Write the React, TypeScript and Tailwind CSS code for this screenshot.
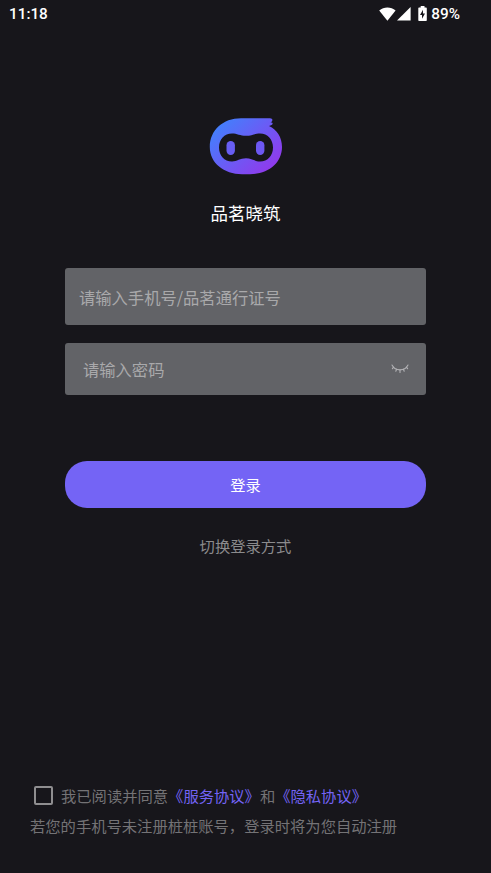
import { useState } from "react";

function StatusBar() {
  return (
    <div className="flex h-7 items-center justify-between pl-[9px] pr-[31px] font-['Roboto',sans-serif] text-[15.3px] font-medium text-white">
      <span>11:18</span>
      <div className="flex items-center">
        <svg className="mr-px h-4 w-[17px]" viewBox="0 0 17 16" fill="currentColor">
          <path d="M.2 4.5C4.8.6 12 .6 16.6 4.5L8.4 14.7z" />
        </svg>
        <svg className="mr-[7px] h-4 w-3.5" viewBox="0 0 14 16" fill="currentColor">
          <path d="M13.6 1v13.5H0z" />
        </svg>
        <svg className="mr-1 h-4 w-[9px]" viewBox="0 0 9 16">
          <path
            d="M2.7 0h3.8v1.4h1.3c.6 0 1 .4 1 1v11.5c0 .6-.4 1-1 1H1.3c-.6 0-1-.4-1-1V2.4c0-.6.4-1 1-1h1.4z"
            fill="currentColor"
          />
          <path d="M5 3.8 2 9h2v3.8L7 7.6H5z" fill="#17161b" />
        </svg>
        <span>89%</span>
      </div>
    </div>
  );
}

function Logo() {
  return (
    <svg className="h-[58px] w-[74px]" viewBox="0 0 74 58">
      <defs>
        <linearGradient id="logo" x1="12" y1="4" x2="60" y2="54" gradientUnits="userSpaceOnUse">
          <stop offset="0" stopColor="#4280fc" />
          <stop offset=".5" stopColor="#6a5cf5" />
          <stop offset="1" stopColor="#903aec" />
        </linearGradient>
      </defs>
      <path
        d="M32 1.2h29c2 0 3 1.5 2 3-.3.6-1 1-1.6 1.3 1.4-.2 2.4.3 2.2 1.2-.2 1-1.5 1.8-3.6 2.3C68 12.500 73 20.500 73 30c0 16-14 27.200-32 27.200h-8C15 57.200.8 46 .8 30 .8 13 14 1.200 32 1.200z"
        fill="url(#logo)"
      />
      <path
        d="M23 16.500c5 0 8 2.300 14 2.300s9-2.300 14-2.300c7.700 0 13 6 13 14s-5.300 14-13 14c-5 0-8-3.200-14-3.200s-9 3.200-14 3.200c-7.700 0-13-6-13-14s5.300-14 13-14z"
        fill="#17161b"
      />
      <rect x="17.500" y="24" width="8.400" height="14" rx="4.200" fill="#685ef4" />
      <rect x="47" y="24" width="8.400" height="14" rx="4.200" fill="#6d58f3" />
    </svg>
  );
}

function ClosedEye() {
  return (
    <svg
      className="h-[10px] w-[18px]"
      viewBox="0 0 18 10"
      fill="none"
      stroke="#b1b1b4"
      strokeWidth="1.100"
      strokeLinecap="round"
    >
      <path d="M1 1c1.700 3.300 4.500 4.900 8 4.900S15.300 4.300 17 1" />
      <path d="M2.600 3.200 1.400 4.700M5.600 5.200l-.8 2M9 6v2.400M12.400 5.200l.8 2M15.400 3.200l1.200 1.500" />
    </svg>
  );
}

export default function App() {
  const [phone, setPhone] = useState("");
  const [password, setPassword] = useState("");
  const [visible, setVisible] = useState(false);
  const [agreed, setAgreed] = useState(false);

  return (
    <div className="flex h-[873px] w-[491px] flex-col overflow-hidden bg-[#17161b] font-['Noto_Sans_CJK_SC',sans-serif]">
      <StatusBar />

      <header className="flex flex-col items-center pt-[89px]">
        <Logo />
        <h1 className="mt-[25px] text-[17.500px] leading-[26px] text-white">品茗晓筑</h1>
      </header>

      <form className="mx-[65px] mt-[42px] flex flex-col" onSubmit={(e) => e.preventDefault()}>
        <input
          type="text"
          value={phone}
          onChange={(e) => setPhone(e.target.value)}
          placeholder="请输入手机号/品茗通行证号"
          className="h-[57px] w-full rounded-[3px] bg-[#626367] px-3.5 text-[16.300px] text-white outline-none placeholder:text-[#a9a9ab]"
        />
        <div className="mt-[18px] flex h-[52px] items-center rounded-[3px] bg-[#626367] pl-[18px] pr-[17px]">
          <input
            type={visible ? "text" : "password"}
            value={password}
            onChange={(e) => setPassword(e.target.value)}
            placeholder="请输入密码"
            className="min-w-0 flex-1 bg-transparent text-[16.300px] text-white outline-none placeholder:text-[#a9a9ab]"
          />
          <button type="button" aria-label="显示密码" onClick={() => setVisible(!visible)}>
            <ClosedEye />
          </button>
        </div>

        <button
          type="submit"
          className="mt-[65.500px] h-[47px] rounded-[22px] bg-[#7464f5] text-[15.300px] text-white"
        >
          登录
        </button>
        <button type="button" className="mt-[25px] self-center text-[15.300px] leading-6 text-[#8b8b8d]">
          切换登录方式
        </button>
      </form>

      <footer className="mb-[33px] mt-auto pl-[30px] text-[15.300px] leading-[30px] text-[#747376]">
        <label className="flex items-center whitespace-nowrap pl-1">
          <input
            type="checkbox"
            checked={agreed}
            onChange={() => setAgreed(!agreed)}
            className="mr-2 h-[19px] w-[19px] appearance-none rounded-[2px] border-2 border-[#8f8e90] checked:bg-[#7464f5]"
          />
          <span>
            我已阅读并同意<span className="text-[#7464f5]">《服务协议》</span>和
            <span className="text-[#7464f5]">《隐私协议》</span>
          </span>
        </label>
        <p className="whitespace-nowrap">若您的手机号未注册桩桩账号，登录时将为您自动注册</p>
      </footer>
    </div>
  );
}
